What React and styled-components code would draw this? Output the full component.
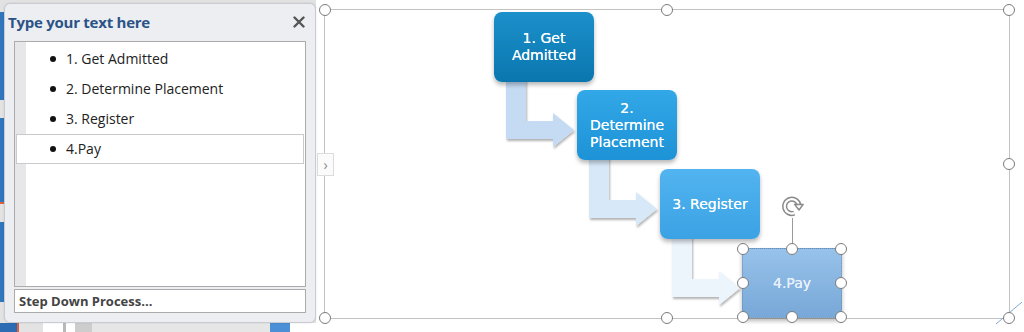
import React from "react";
import styled, { createGlobalStyle } from "styled-components";

const GlobalStyle = createGlobalStyle`
  html, body { margin: 0; padding: 0; background: #fff; }
  #root { width: 1024px; height: 332px; overflow: hidden; }
`;

const items = ["1. Get Admitted", "2. Determine Placement", "3. Register", "4.Pay"];

const steps = [
  { lines: ["1. Get", "Admitted"], x: 169, y: 2, top: "#1b90cb", bottom: "#0b76ae" },
  { lines: ["2.", "Determine", "Placement"], x: 252, y: 80, top: "#32a8e8", bottom: "#1d92d6" },
  { lines: ["3. Register"], x: 335, y: 159, top: "#52b4f0", bottom: "#3ba2e4" },
  { lines: ["4.Pay"], x: 417, y: 238, top: "#97c2ea", bottom: "#78a8d8", selected: true },
];

const arrowColors = ["#c4dbf3", "#d7e8f8", "#ecf4fc"];

const corners = [
  [0, 0], [0.5, 0], [1, 0],
  [0, 0.5], [1, 0.5],
  [0, 1], [0.5, 1], [1, 1],
];

const RotateIcon = () => (
  <svg width="26" height="26" viewBox="0 0 26 26">
    <path d="M15.2 19.1 A7.2 7.2 0 1 1 20 11.6" fill="none" stroke="#8a8a8a" strokeWidth="5.2" />
    <path d="M15.2 19.1 A7.2 7.2 0 1 1 20 11.6" fill="none" stroke="#fff" strokeWidth="2.2" />
    <polygon points="15.6,10.4 24.2,10.4 20,16" fill="#fff" stroke="#8a8a8a" strokeWidth="1.5" strokeLinejoin="round" />
  </svg>
);

const CloseIcon = () => (
  <svg width="12" height="12" viewBox="0 0 12 12">
    <path d="M1.5 1.5 L10.5 10.5 M10.5 1.5 L1.5 10.5" stroke="#555" strokeWidth="2.4" strokeLinecap="round" />
  </svg>
);

const arrowPath = (k) => {
  const dx = k * 83;
  const dy = k * 79;
  const p = [
    [181, 60], [201, 60], [201, 111], [228, 111], [228, 103],
    [249, 120], [228, 137], [228, 129], [181, 129],
  ];
  return "M" + p.map(([x, y]) => `${x + dx},${y + dy}`).join(" L") + " Z";
};

export default function App() {
  return (
    <Window>
      <GlobalStyle />
      <LeftPane>
        <ThumbList>
          <ThumbEdge>
            <Thumb $h={88} />
            <Thumb $h={84} $accent />
            <Thumb $h={80} />
          </ThumbEdge>
        </ThumbList>
        <BottomStrip>
          <Segment $w={17} $c="#2b6cb2" />
          <Segment $w={2} $c="#e0603c" />
          <Segment $w={24} $c="#e3e3e3" />
          <Segment $w={20} $c="#ffffff" />
          <Segment $w={3} $c="#b9b9b9" />
          <Segment $w={9} $c="#ffffff" />
          <Segment $w={17} $c="#cdcdcd" />
          <Segment $w={178} $c="#e6e6e6" />
          <Segment $w={20} $c="#4b8fd6" />
          <Segment $w={26} $c="#ffffff" />
        </BottomStrip>
      </LeftPane>

      <SlideArea>
        <Frame>
          <Arrows width="686" height="310">
            <defs>
              <filter id="sh" x="-20%" y="-20%" width="140%" height="140%">
                <feDropShadow dx="1" dy="2" stdDeviation="1.3" floodColor="#000" floodOpacity="0.3" />
              </filter>
            </defs>
            {arrowColors.map((c, k) => (
              <path key={k} d={arrowPath(k)} fill={c} filter="url(#sh)" />
            ))}
          </Arrows>

          {steps.map((s, i) => (
            <Step key={i} $x={s.x} $y={s.y} $top={s.top} $bottom={s.bottom} $selected={s.selected}>
              {s.lines.map((l) => (
                <StepLine key={l} $selected={s.selected}>{l}</StepLine>
              ))}
              {s.selected && (
                <>
                  <RotateStem />
                  <RotateHandle>
                    <RotateIcon />
                  </RotateHandle>
                  {corners.map(([h, v]) => (
                    <Handle key={`${h}-${v}`} $h={h} $v={v} />
                  ))}
                </>
              )}
            </Step>
          ))}

          {corners.map(([h, v]) => (
            <Handle key={`f${h}-${v}`} $h={h} $v={v} />
          ))}
          <PaneToggle>›</PaneToggle>
        </Frame>
        <Connector width="40" height="30">
          <line x1="38" y1="0" x2="12" y2="22" stroke="#7fa8d4" strokeWidth="1" />
        </Connector>
      </SlideArea>

      <TextPane>
        <PaneHeader>
          <PaneTitle>Type your text here</PaneTitle>
          <CloseButton>
            <CloseIcon />
          </CloseButton>
        </PaneHeader>
        <TextBox>
          {items.map((t, i) => (
            <Row key={t} $active={i === items.length - 1}>
              <Bullet />
              <RowText>{t}</RowText>
            </Row>
          ))}
        </TextBox>
        <LayoutName>Step Down Process...</LayoutName>
      </TextPane>
    </Window>
  );
}

const Window = styled.div`
  position: relative;
  display: flex;
  width: 1024px;
  height: 332px;
  font-family: "Open Sans", "Noto Sans", sans-serif;
`;

const LeftPane = styled.div`
  width: 316px;
  display: flex;
  flex-direction: column;
`;

const ThumbList = styled.div`
  flex: 1;
  display: flex;
  background: #e2e2e2;
`;

const ThumbEdge = styled.div`
  width: 5px;
  display: flex;
  flex-direction: column;
  gap: 18px;
  padding-top: 12px;
`;

const Thumb = styled.div`
  height: ${(p) => p.$h}px;
  background: #2f76bc;
  border-bottom: ${(p) => (p.$accent ? "2px solid #e0603c" : "none")};
`;

const BottomStrip = styled.div`
  height: 9px;
  display: flex;
`;

const Segment = styled.div`
  width: ${(p) => p.$w}px;
  background: ${(p) => p.$c};
`;

const SlideArea = styled.div`
  position: relative;
  flex: 1;
  padding: 9px 0 0 8px;
  background: #fff;
`;

const Frame = styled.div`
  position: relative;
  width: 686px;
  height: 310px;
  box-sizing: border-box;
  border: 1.5px solid #c2c2c2;
`;

const Arrows = styled.svg`
  position: absolute;
  left: 0;
  top: 0;
  overflow: visible;
`;

const Step = styled.div`
  position: absolute;
  left: ${(p) => p.$x}px;
  top: ${(p) => p.$y}px;
  width: 100px;
  height: 70px;
  box-sizing: border-box;
  display: flex;
  flex-direction: column;
  justify-content: center;
  align-items: center;
  border-radius: ${(p) => (p.$selected ? "2px" : "8px")};
  background: linear-gradient(${(p) => p.$top}, ${(p) => p.$bottom});
  border: ${(p) => (p.$selected ? "1px dotted #6d8cae" : "none")};
  box-shadow: 0 3px 4px rgba(0, 0, 0, 0.28);
`;

const StepLine = styled.div`
  font-family: "DejaVu Sans", Verdana, sans-serif;
  font-size: 14px;
  line-height: 17px;
  color: ${(p) => (p.$selected ? "#e9f2fb" : "#fff")};
  text-shadow: 0 0 0.6px ${(p) => (p.$selected ? "#e9f2fb" : "#fff")};
  white-space: nowrap;
`;

const Handle = styled.span`
  position: absolute;
  left: ${(p) => p.$h * 100}%;
  top: ${(p) => p.$v * 100}%;
  width: 10px;
  height: 10px;
  transform: translate(-50%, -50%);
  border: 1.7px solid #7b7b7b;
  border-radius: 50%;
  background: #fff;
  z-index: 1;
`;

const RotateStem = styled.span`
  position: absolute;
  left: 50%;
  top: -31px;
  width: 1px;
  height: 31px;
  background: #9a9a9a;
`;

const RotateHandle = styled.span`
  position: absolute;
  left: 50%;
  top: -42px;
  width: 26px;
  height: 26px;
  transform: translate(-50%, -50%);
`;

const PaneToggle = styled.div`
  position: absolute;
  left: -8px;
  top: 143px;
  width: 17px;
  height: 23px;
  box-sizing: border-box;
  display: flex;
  align-items: center;
  justify-content: center;
  background: #fbfbfb;
  border: 1px solid #dcdcdc;
  color: #8a8a8a;
  font-size: 14px;
  z-index: 2;
`;

const Connector = styled.svg`
  position: absolute;
  right: 0;
  bottom: 0;
`;

const TextPane = styled.div`
  position: absolute;
  left: 4px;
  top: 3px;
  width: 312px;
  height: 320px;
  box-sizing: border-box;
  display: flex;
  flex-direction: column;
  padding: 0 9px 9px 9px;
  background: #eceef2;
  border: 1px solid #c8cbd2;
  border-radius: 6px;
  box-shadow: 0 0 2px rgba(0, 0, 0, 0.12);
  z-index: 3;
`;

const PaneHeader = styled.div`
  height: 37px;
  display: flex;
  align-items: center;
  justify-content: space-between;
  margin: 0 1px 0 -6px;
`;

const PaneTitle = styled.div`
  font-size: 15px;
  font-weight: 700;
  color: #2b5387;
  letter-spacing: -0.25px;
`;

const CloseButton = styled.div`
  display: flex;
  align-items: center;
`;

const TextBox = styled.div`
  height: 248px;
  box-sizing: border-box;
  display: flex;
  flex-direction: column;
  padding-top: 2px;
  border: 1px solid #ababab;
  background: linear-gradient(to right, #e7e7ea 0, #e7e7ea 11px, #fff 11px);
`;

const Row = styled.div`
  height: 30px;
  box-sizing: border-box;
  display: flex;
  align-items: center;
  padding-left: ${(p) => (p.$active ? 33 : 35)}px;
  margin: ${(p) => (p.$active ? "0 1px" : "0")};
  border: ${(p) => (p.$active ? "1px solid #cacaca" : "none")};
  background: ${(p) => (p.$active ? "#fff" : "transparent")};
`;

const Bullet = styled.span`
  width: 6px;
  height: 6px;
  border-radius: 50%;
  background: #111;
  margin-right: 10px;
`;

const RowText = styled.span`
  font-size: 14px;
  color: #222;
`;

const LayoutName = styled.div`
  margin-top: 2px;
  height: 24px;
  box-sizing: border-box;
  display: flex;
  align-items: center;
  padding-left: 4px;
  border: 1px solid #ababab;
  background: #fff;
  font-size: 13px;
  font-weight: 700;
  color: #444;
`;
